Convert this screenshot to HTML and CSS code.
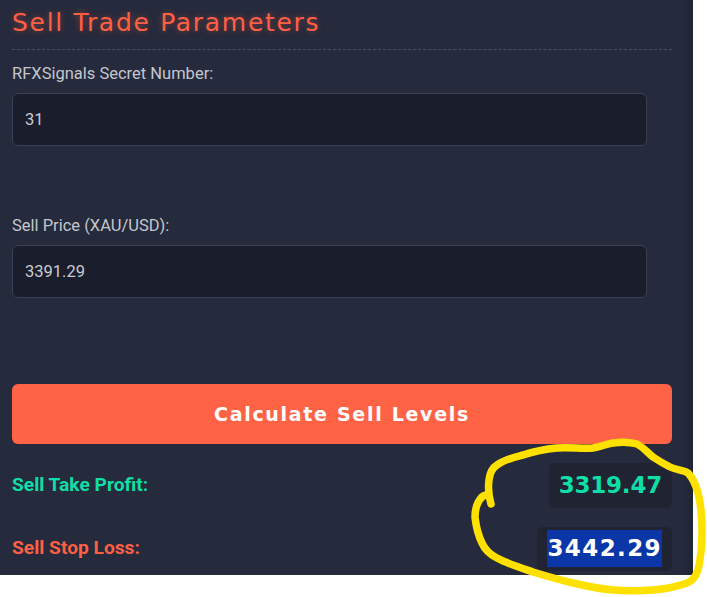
FILE: index.html
```html
<!DOCTYPE html>
<html lang="en">
<head>
    <meta charset="UTF-8">
    <meta name="viewport" content="width=device-width, initial-scale=1.0">
    <title>Sell Trade Parameters</title>
    <link rel="stylesheet" href="styles.css">
</head>
<body>
    <div class="panel">
        <h2 class="panel-title">Sell Trade Parameters</h2>

        <div class="field">
            <label for="secretNumber">RFXSignals Secret Number:</label>
            <input type="text" id="secretNumber" value="31">
        </div>

        <div class="field">
            <label for="sellPrice">Sell Price (XAU/USD):</label>
            <input type="text" id="sellPrice" value="3391.29">
        </div>

        <button class="calc-btn">Calculate Sell Levels</button>

        <div class="result-row">
            <span class="result-label profit">Sell Take Profit:</span>
            <span class="result-value profit">3319.47</span>
        </div>
        <div class="result-row">
            <span class="result-label loss">Sell Stop Loss:</span>
            <span class="result-value"><span class="selected">3442.29</span></span>
        </div>
    </div>

    <!-- hand drawn marker circle around the results -->
    <svg class="scribble" width="707" height="597" viewBox="0 0 707 597">
        <path d="M491 504 C489 497 488 487 489 480 C490 472 492 468 497 465 C505 459 515 457 523 455 C535 451 546 449 557 448 C570 447 582 449 593 448 C600 447 606 444 613 443 C621 442 630 442 637 444 C643 447 648 453 653 457 C659 461 664 464 670 467 C676 470 684 470 688 473 C694 479 696 486 698 493 C701 505 702 518 702 530 C702 544 701 558 698 570 C696 576 692 581 687 583 C676 587 665 589 653 590 C640 591 626 591 613 590 C599 589 586 586 573 583 C560 580 546 576 533 572 C521 568 508 564 497 558 C491 555 485 550 482 543 C478 535 476 526 475 517 C475 510 477 502 482 497 C484 495 485 495 487 495" />
    </svg>
</body>
</html>
```

FILE: styles.css
```css
html, body {
    margin: 0;
    padding: 0;
    background: #fff;
}
body {
    font-family: Roboto, "Liberation Sans", sans-serif;
    width: 707px;
    height: 597px;
    overflow: hidden;
    position: relative;
}
.panel {
    box-sizing: border-box;
    width: 693px;
    height: 575px;
    padding: 0 21px 0 12px;
    background: #252a3c;
    box-shadow: inset -12px 0 10px -10px rgba(20, 22, 34, 0.45);
    overflow: hidden;
}
.panel-title {
    margin: 0 0 12px;
    height: 50px;
    box-sizing: border-box;
    padding-top: 8px;
    border-bottom: 1px dashed #4a4f63;
    font-family: "DejaVu Sans", sans-serif;
    font-size: 25px;
    line-height: 30px;
    letter-spacing: 1.7px;
    font-weight: normal;
    color: #ff5f43;
    text-shadow: 0 0 6px rgba(255, 95, 67, 0.45);
    white-space: nowrap;
}
.field {
    height: 152px;
}
.field label {
    display: block;
    height: 31px;
    padding-top: 2px;
    box-sizing: border-box;
    font-size: 16.5px;
    line-height: 20px;
    color: #c4c6cd;
}
.field input {
    display: block;
    box-sizing: border-box;
    width: 635px;
    height: 53px;
    padding: 0 12px;
    background: #1a1d2b;
    border: 1px solid #3c4052;
    border-radius: 6px;
    font-family: Roboto, "Liberation Sans", sans-serif;
    font-size: 16.5px;
    color: #c9cbd1;
    outline: none;
}
.calc-btn {
    display: block;
    width: 100%;
    height: 60px;
    margin-top: 18px;
    background: #ff6345;
    color: #fff;
    border: none;
    border-radius: 6px;
    font-family: "DejaVu Sans", sans-serif;
    font-size: 19px;
    font-weight: bold;
    letter-spacing: 1.7px;
    cursor: pointer;
}
.result-row {
    display: flex;
    justify-content: space-between;
    align-items: center;
    height: 44.5px;
    margin-top: 19px;
}
.result-label {
    padding-bottom: 2px;
    font-size: 19.2px;
    font-weight: 700;
}
.profit {
    color: #0ddfa6;
}
.loss {
    color: #ff5f43;
}
.result-value {
    display: flex;
    align-items: center;
    height: 44.5px;
    box-sizing: border-box;
    padding: 0 10px;
    background: #1f2332;
    border-radius: 6px;
    font-family: "DejaVu Sans", sans-serif;
    font-size: 23px;
    font-weight: bold;
    letter-spacing: -0.2px;
}
.selected {
    display: block;
    line-height: 37px;
    letter-spacing: 1.4px;
    background: #0a36a8;
    color: #fff;
}
.scribble {
    position: absolute;
    left: 0;
    top: 0;
    pointer-events: none;
}
.scribble path {
    fill: none;
    stroke: #ffe100;
    stroke-width: 7.5;
    stroke-linecap: round;
    stroke-linejoin: round;
}
```
